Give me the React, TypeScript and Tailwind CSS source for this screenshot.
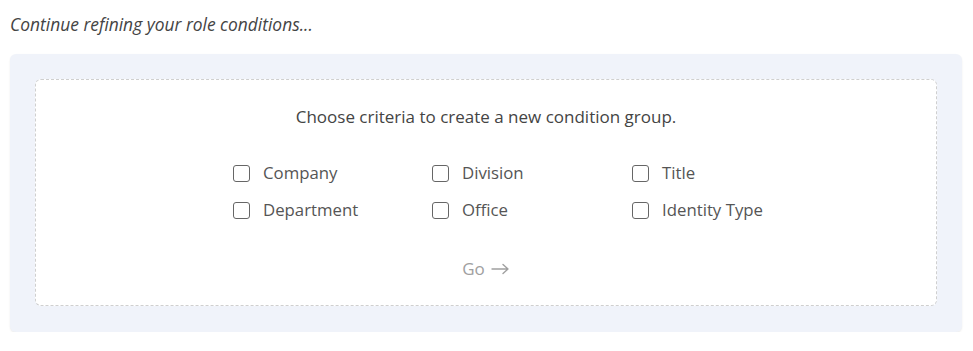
import React from "react";

const criteria = [
  "Company",
  "Division",
  "Title",
  "Department",
  "Office",
  "Identity Type",
];

function CriteriaCheckbox({ label }: { label: string }) {
  return (
    <label className="flex h-6 items-center gap-[13px] text-[16.8px] leading-6 text-[#555]">
      <span className="h-[17px] w-[17px] shrink-0 rounded-[3px] border-[1.5px] border-[#666] bg-white" />
      <span>{label}</span>
    </label>
  );
}

export default function App() {
  return (
    <div
      className="w-[973px] bg-white pt-3 text-[#333]"
      style={{ fontFamily: '"Open Sans", "Noto Sans", sans-serif' }}
    >
      <p className="px-[10px] text-[17.4px] leading-6 italic text-[#444]">
        Continue refining your role conditions...
      </p>

      <div className="mx-[10px] mt-[18px] mr-[11px] rounded-md bg-[#f0f3fa] p-[25px] pb-[26px] shadow-[0_1px_2px_rgba(0,0,0,0.08)]">
        <div className="rounded-md border border-dashed border-[#cfcfcf] bg-white pt-[25px] pb-[24px]">
          <p className="text-center text-[17px] leading-6 text-[#444]">
            Choose criteria to create a new condition group.
          </p>

          <div className="mt-8 ml-[197px] grid grid-cols-[199px_200px_auto] gap-y-[13px]">
            {criteria.map((c) => (
              <CriteriaCheckbox key={c} label={c} />
            ))}
          </div>

          <div className="mt-[35px] flex items-center justify-center gap-1.5 text-[17px] leading-6 text-[#a0a0a0]">
            <span>Go</span>
            <svg width="19" height="12" viewBox="0 0 19 12" fill="none">
              <path
                d="M1 6h16M12 1.5L17 6l-5 4.5"
                stroke="#a0a0a0"
                strokeWidth="1.4"
                strokeLinecap="round"
                strokeLinejoin="round"
              />
            </svg>
          </div>
        </div>
      </div>
    </div>
  );
}
